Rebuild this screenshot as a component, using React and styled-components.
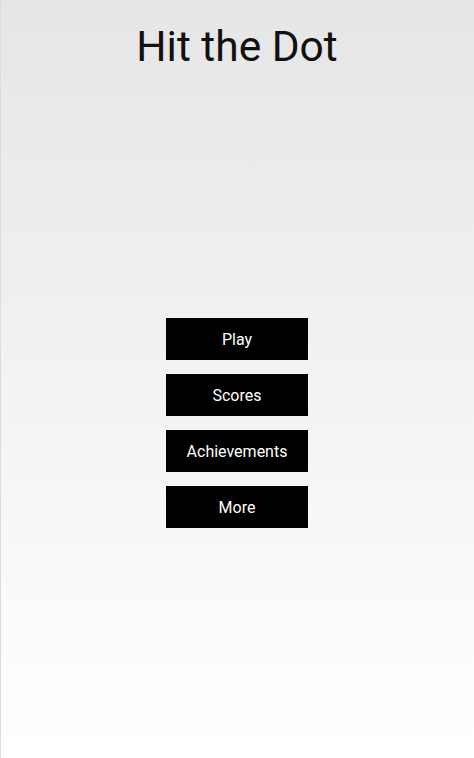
import React from "react";
import styled, { createGlobalStyle } from "styled-components";

const Global = createGlobalStyle`
  html, body { margin: 0; padding: 0; }
  body {
    font-family: Roboto, "Noto Sans", sans-serif;
    background: #fff;
  }
`;

const Screen = styled.div`
  width: 474px;
  height: 758px;
  box-sizing: border-box;
  background: linear-gradient(to bottom, #e6e6e6 0%, #f1f1f1 45%, #fdfdfd 90%, #ffffff 100%);
  box-shadow: inset 1px 0 0 #dcdcdc;
  display: flex;
  flex-direction: column;
  align-items: center;
  overflow: hidden;
`;

const Title = styled.h1`
  margin: 0;
  padding-top: 22px;
  font-family: Roboto, sans-serif;
  font-weight: 400;
  font-size: 42.5px;
  line-height: 50px;
  color: #111;
`;

const Menu = styled.nav`
  margin-top: 246px;
  display: flex;
  flex-direction: column;
  gap: 14px;
`;

const MenuButton = styled.button`
  width: 142px;
  height: 42px;
  border: none;
  background: #000;
  color: #fff;
  font-family: Roboto, sans-serif;
  font-size: 16px;
  padding: 0;
  cursor: pointer;
`;

export default function App() {
  const items = ["Play", "Scores", "Achievements", "More"];
  return (
    <>
      <Global />
      <Screen>
        <Title>Hit the Dot</Title>
        <Menu>
          {items.map((t) => (
            <MenuButton key={t}>{t}</MenuButton>
          ))}
        </Menu>
      </Screen>
    </>
  );
}
